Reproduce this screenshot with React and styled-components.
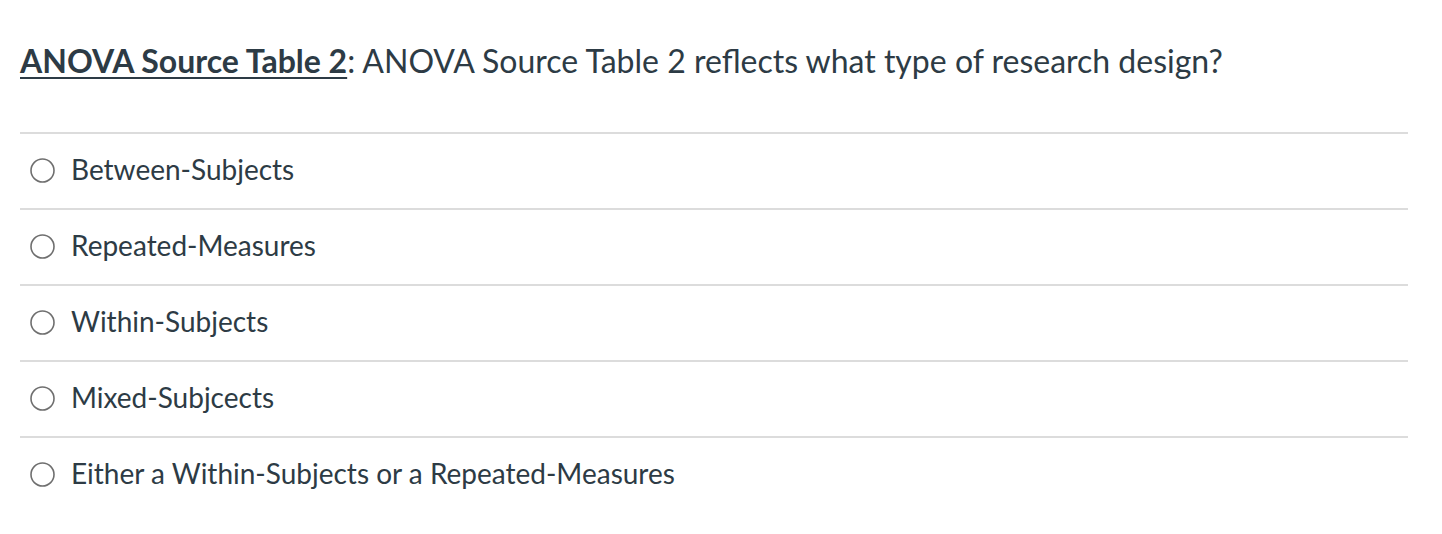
import React from "react";
import styled, { createGlobalStyle } from "styled-components";

const Global = createGlobalStyle`
  html, body { margin: 0; padding: 0; background: #fff; }
  body { font-family: Lato, "Helvetica Neue", Arial, sans-serif; color: #2d3b45; }
`;

const Page = styled.div`
  padding: 0 34px 0 20px;
  width: 1388px;
`;

const Question = styled.h2`
  margin: 0;
  padding-top: 41px;
  height: 132px;
  box-sizing: border-box;
  font-size: 32px;
  line-height: 40px;
  font-weight: 400;
  color: #2d3b45;
`;

const Source = styled.span`
  font-weight: 700;
  text-decoration: underline;
  text-decoration-thickness: 2px;
  text-underline-offset: 4px;
`;

const List = styled.div`
  display: flex;
  flex-direction: column;
`;

const Answer = styled.label`
  display: flex;
  align-items: center;
  gap: 15px;
  height: 74px;
  border-top: 2px solid #dcdcdc;
  padding-left: 10px;
  font-size: 28px;
  color: #2d3b45;
`;

const Text = styled.span`
  padding-bottom: 5px;
`;

const Radio = styled.svg`
  flex: none;
  width: 26px;
  height: 26px;
`;

const answers = [
  "Between-Subjects",
  "Repeated-Measures",
  "Within-Subjects",
  "Mixed-Subjcects",
  "Either a Within-Subjects or a Repeated-Measures",
];

export default function App() {
  return (
    <>
      <Global />
      <Page>
        <Question>
          <Source>ANOVA Source Table 2</Source>: ANOVA Source Table 2 reflects what type of research design?
        </Question>
        <List>
          {answers.map((a) => (
            <Answer key={a}>
              <Radio viewBox="0 0 26 26">
                <circle cx="12.5" cy="12.5" r="11.5" fill="#fff" stroke="#6f6f6f" strokeWidth="1.6" />
              </Radio>
              <Text>{a}</Text>
            </Answer>
          ))}
        </List>
      </Page>
    </>
  );
}
